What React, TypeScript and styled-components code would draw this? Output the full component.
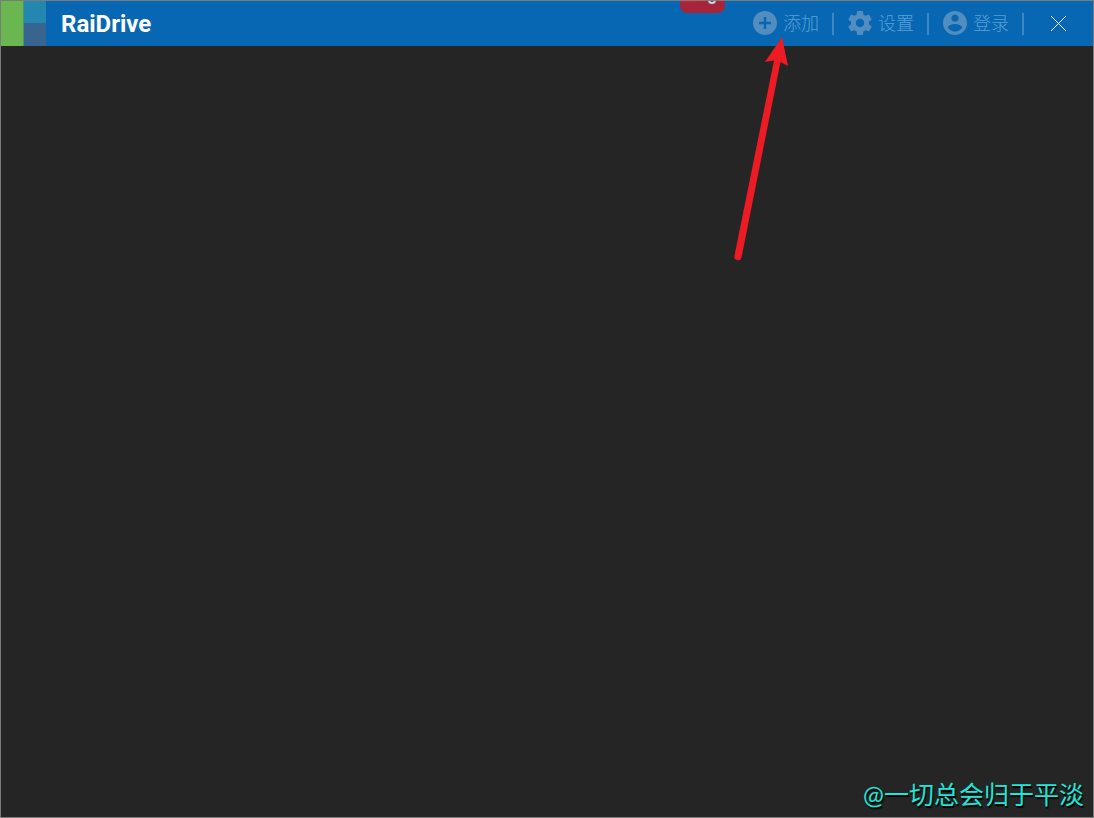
import React from "react";
import styled, { createGlobalStyle } from "styled-components";

const GlobalStyle = createGlobalStyle`
  *, *::before, *::after { box-sizing: border-box; }
  body {
    margin: 0;
    background: #252525;
    font-family: Roboto, "Noto Sans CJK SC", sans-serif;
  }
`;

const AppWindow = styled.div`
  position: relative;
  display: flex;
  flex-direction: column;
  min-height: 100vh;
  border: 1px solid #7b7b7b;
  background: #252525;
`;

const TitleBar = styled.header`
  position: relative;
  display: flex;
  align-items: center;
  height: 45px;
  background: #0767b3;
`;

const Logo = styled.svg`
  display: block;
  flex: none;
  width: 45px;
  height: 45px;
`;

const Title = styled.h1`
  flex: 1;
  margin: 0;
  padding-left: 15px;
  color: #ffffff;
  font-size: 24px;
  line-height: 28px;
  font-weight: 700;
`;

const Toolbar = styled.nav`
  display: flex;
  align-items: center;
`;

const ToolButton = styled.button`
  display: flex;
  align-items: center;
  gap: 6px;
  height: 45px;
  margin: 0;
  padding: 0 13px 1px 14px;
  border: 0;
  background: transparent;
  color: #518dbf;
  cursor: pointer;
`;

const ToolIcon = styled.svg`
  display: block;
  flex: none;
  width: 24px;
  height: 24px;
  fill: currentColor;
`;

const ToolLabel = styled.span`
  padding-bottom: 2px;
  color: #5a9fd6;
  font-family: "Noto Sans CJK SC", sans-serif;
  font-size: 18px;
  line-height: 26px;
  font-weight: 300;
`;

const Divider = styled.span`
  width: 2px;
  height: 22px;
  background: #3f87c3;
`;

const CloseButton = styled.button`
  display: flex;
  align-items: center;
  justify-content: center;
  width: 69px;
  height: 45px;
  padding: 0;
  border: 0;
  background: transparent;
  cursor: pointer;
`;

const Badge = styled.svg`
  position: absolute;
  top: 0;
  right: 368px;
  width: 45px;
  height: 12px;
`;

const Content = styled.main`
  display: flex;
  flex: 1;
  flex-direction: column;
  justify-content: flex-end;
  align-items: flex-end;
  padding: 0 9px 5px;
`;

const Signature = styled.p`
  margin: 0;
  color: #1ee6d8;
  font-family: Lato, "Noto Sans CJK SC", sans-serif;
  font-size: 25px;
  line-height: 36px;
  font-weight: 400;
  text-shadow: 1px 2px 1px #000000;
`;

const Arrow = styled.svg`
  position: absolute;
  top: 33px;
  right: 302px;
  width: 60px;
  height: 230px;
  pointer-events: none;
`;

const tools = [
  {
    label: "添加",
    path: "M12 2C6.48 2 2 6.48 2 12s4.48 10 10 10 10-4.48 10-10S17.52 2 12 2zm5 11h-4v4h-2v-4H7v-2h4V7h2v4h4v2z",
  },
  {
    label: "设置",
    path: "M19.43 12.98c.04-.32.07-.64.07-.98s-.03-.66-.07-.98l2.11-1.65c.19-.15.24-.42.12-.64l-2-3.46c-.12-.22-.39-.3-.61-.22l-2.49 1c-.52-.4-1.08-.73-1.69-.98l-.38-2.65C14.46 2.18 14.25 2 14 2h-4c-.25 0-.46.18-.49.42l-.38 2.65c-.61.25-1.17.59-1.69.98l-2.49-1c-.23-.09-.49 0-.61.22l-2 3.46c-.13.22-.07.49.12.64l2.11 1.65c-.04.32-.07.65-.07.98s.03.66.07.98l-2.11 1.65c-.19.15-.24.42-.12.64l2 3.46c.12.22.39.3.61.22l2.49-1c.52.4 1.08.73 1.69.98l.38 2.65c.03.24.24.42.49.42h4c.25 0 .46-.18.49-.42l.38-2.65c.61-.25 1.17-.59 1.69-.98l2.49 1c.23.09.49 0 .61-.22l2-3.46c.12-.22.07-.49-.12-.64l-2.11-1.65zM12 15.5c-1.93 0-3.5-1.57-3.5-3.5s1.57-3.5 3.5-3.5 3.5 1.57 3.5 3.5-1.57 3.5-3.5 3.5z",
  },
  {
    label: "登录",
    path: "M12 2C6.48 2 2 6.48 2 12s4.48 10 10 10 10-4.48 10-10S17.52 2 12 2zm0 3c1.66 0 3 1.34 3 3s-1.34 3-3 3-3-1.34-3-3 1.34-3 3-3zm0 14.2c-2.5 0-4.71-1.28-6-3.22.03-1.99 4-3.08 6-3.08 1.99 0 5.97 1.09 6 3.08-1.29 1.94-3.5 3.22-6 3.22z",
  },
];

export default function App() {
  return (
    <>
      <GlobalStyle />
      <AppWindow>
        <TitleBar>
          <Logo viewBox="0 0 45 45" aria-hidden="true">
            <rect width="45" height="45" fill="#2487af" />
            <rect width="22" height="45" fill="#6ab651" />
            <rect x="22" width="1" height="45" fill="#4a9672" />
            <rect x="23" y="22" width="22" height="23" fill="#37658f" />
          </Logo>
          <Title>RaiDrive</Title>
          <Toolbar>
            {tools.map((tool) => (
              <React.Fragment key={tool.label}>
                <ToolButton type="button">
                  <ToolIcon viewBox="2 2 20 20" aria-hidden="true">
                    <path d={tool.path} />
                  </ToolIcon>
                  <ToolLabel>{tool.label}</ToolLabel>
                </ToolButton>
                <Divider />
              </React.Fragment>
            ))}
            <CloseButton type="button" aria-label="关闭">
              <svg width="15" height="15" viewBox="0 0 15 15" aria-hidden="true">
                <path d="M0 0 15 15M15 0 0 15" stroke="#ffffff" strokeWidth="1" />
              </svg>
            </CloseButton>
          </Toolbar>
          <Badge viewBox="0 0 45 12" aria-hidden="true">
            <path d="M0 0H45V4Q45 12 37 12H8Q0 12 0 4Z" fill="#a82539" />
            <path d="M0 0H27Q18 1 0 1Z" fill="#c92532" />
            <path d="M29 -1A3 3 0 0 0 35 -1" fill="none" stroke="#c5dcea" strokeWidth="2" />
          </Badge>
        </TitleBar>
        <Content>
          <Signature>@一切总会归于平淡</Signature>
        </Content>
        <Arrow viewBox="0 0 60 230" aria-hidden="true">
          <path
            d="M51 3 34 28 43 26.500 3.500 221.500A3.500 3.500 0 0 0 10.500 223.500L49.500 28 57 32Z"
            fill="#ed1c24"
          />
        </Arrow>
      </AppWindow>
    </>
  );
}
